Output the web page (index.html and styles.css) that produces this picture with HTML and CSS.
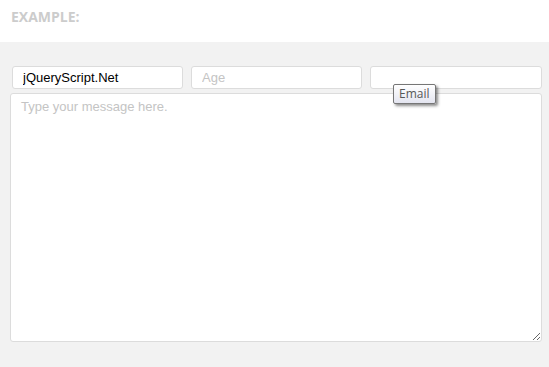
FILE: index.html
```html
<!DOCTYPE html>
<html lang="en">
<head>
    <meta charset="UTF-8">
    <title>Placeholder Example</title>
    <link rel="stylesheet" href="styles.css">
</head>
<body>
    <header class="header">
        <h2>EXAMPLE:</h2>
    </header>

    <main class="demo">
        <div class="field-row">
            <input type="text" value="jQueryScript.Net" placeholder="Name">
            <input type="text" placeholder="Age">
            <input type="text" title="Email">
        </div>
        <textarea placeholder="Type your message here."></textarea>
        <div class="tooltip">Email</div>
    </main>
</body>
</html>
```

FILE: styles.css
```css
/* Base */
* {
    margin: 0;
    padding: 0;
    box-sizing: border-box;
}

body {
    background: #f2f2f2;
    font-family: 'Liberation Sans', Arial, sans-serif;
    height: 367px;
    overflow: hidden;
}

/* Header */
.header {
    background: #fff;
    height: 42px;
    padding: 8px 11px 0;
}

.header h2 {
    font-family: 'Open Sans', sans-serif;
    font-size: 14px;
    font-weight: 700;
    color: #cccccc;
    line-height: 18px;
}

/* Form */
.demo {
    position: relative;
    padding: 24px 7px 0 10px;
}

.field-row {
    display: flex;
    gap: 8px;
    padding-left: 2px;
    margin-bottom: 4px;
}

.field-row input {
    width: 171px;
    height: 23px;
    border: 1px solid #dcdcdc;
    border-radius: 3px;
    background: #fff;
    padding: 0 10px;
    font-family: 'Liberation Sans', Arial, sans-serif;
    font-size: 13px;
    color: #000;
    outline: none;
}

.field-row input:last-child {
    width: 172px;
}

textarea {
    display: block;
    width: 532px;
    height: 249px;
    border: 1px solid #dcdcdc;
    border-radius: 3px;
    background: #fff;
    padding: 5px 10px;
    font-family: 'Liberation Sans', Arial, sans-serif;
    font-size: 13px;
    outline: none;
}

::placeholder {
    color: #c4c4c4;
}

/* Tooltip */
.tooltip {
    position: absolute;
    left: 393px;
    top: 42px;
    padding: 1px 5px 1px;
    border: 1px solid #767676;
    border-radius: 2px;
    background: linear-gradient(#ffffff, #e4e5f0);
    box-shadow: 2px 2px 3px rgba(0, 0, 0, 0.45);
    font-family: 'Open Sans', sans-serif;
    font-size: 12px;
    line-height: 16px;
    color: #575757;
}
```
